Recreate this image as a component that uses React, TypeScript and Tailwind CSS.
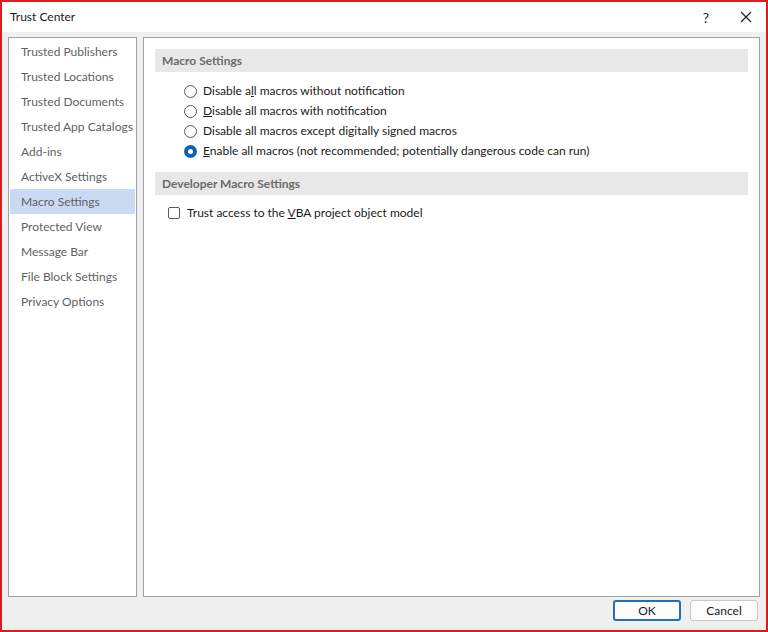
import React from "react";

const nav = ["Trusted Publishers","Trusted Locations","Trusted Documents","Trusted App Catalogs","Add-ins","ActiveX Settings","Macro Settings","Protected View","Message Bar","File Block Settings","Privacy Options"];

function Radio({checked}:{checked?:boolean}) {
  return checked ? (
    <span className="w-[13px] h-[13px] rounded-full bg-[#0f5fb4] flex items-center justify-center shrink-0"><span className="w-[5px] h-[5px] rounded-full bg-white"/></span>
  ) : (
    <span className="w-[13px] h-[13px] rounded-full border border-[#5a5a5a] bg-white shrink-0"/>
  );
}

export default function App() {
  return (
    <div className="w-[768px] h-[632px] border-2 border-[#e01b1b] bg-[#f0f0f0] flex flex-col text-[12px] text-[#1a1a1a] whitespace-nowrap" style={{fontFamily:'Lato, "Noto Sans", sans-serif'}}>
      <div className="h-[30px] bg-white flex items-center pl-[8px] shrink-0">
        <span className="flex-1">Trust Center</span>
        <span className="w-[40px] text-center text-[14px]">?</span>
        <span className="w-[40px] flex justify-center">
          <svg width="12" height="12" viewBox="0 0 12 12"><path d="M1 1L11 11M11 1L1 11" stroke="#222" strokeWidth="1.2"/></svg>
        </span>
      </div>
      <div className="flex gap-[6px] px-[6px] pt-[5px] h-[565px] shrink-0">
        <div className="w-[129px] bg-white border border-[#a0a0a0] pt-[1px] px-[1px]">
          {nav.map(n => (
            <div key={n} className={`h-[25px] flex items-center pl-[11px] text-[#5f5f5f] ${n==="Macro Settings"?"bg-[#c9dbf3] text-[#3a3a3a]":""}`}>{n}</div>
          ))}
        </div>
        <div className="flex-1 bg-white border border-[#a0a0a0] pt-[11px] px-[11px]">
          <div className="h-[23px] bg-[#e8e8e8] flex items-center pl-[7px] font-bold text-[#6a6a6a]">Macro Settings</div>
          <div className="pl-[29px] pt-[9px] flex flex-col">
            {[
              [<>Disable a<u>l</u>l macros without notification</>,false],
              [<><u>D</u>isable all macros with notification</>,false],
              [<>Disable all macros except digitally signed macros</>,false],
              [<><u>E</u>nable all macros (not recommended; potentially dangerous code can run)</>,true],
            ].map(([t,c],i)=>(
              <div key={i} className="h-[20px] flex items-center gap-[6px]"><Radio checked={c as boolean}/><span>{t as React.ReactNode}</span></div>
            ))}
          </div>
          <div className="h-[23px] bg-[#e8e8e8] flex items-center pl-[7px] font-bold text-[#6a6a6a] mt-[11px]">Developer Macro Settings</div>
          <div className="pl-[13px] pt-[8px] h-[27px] flex items-center gap-[7px]">
            <span className="w-[12px] h-[12px] border border-[#5a5a5a] rounded-[2px] bg-white"/>
            <span>Trust access to the <u>V</u>BA project object model</span>
          </div>
        </div>
      </div>
      <div className="flex justify-end gap-[9px] pr-[8px] pt-[3px]">
        <button className="w-[68px] h-[21px] border-2 border-[#1f6fbf] rounded-[3px] bg-[#fdfdfd]">OK</button>
        <button className="w-[68px] h-[21px] border border-[#c8c8c8] rounded-[3px] bg-[#fdfdfd]">Cancel</button>
      </div>
    </div>
  );
}
